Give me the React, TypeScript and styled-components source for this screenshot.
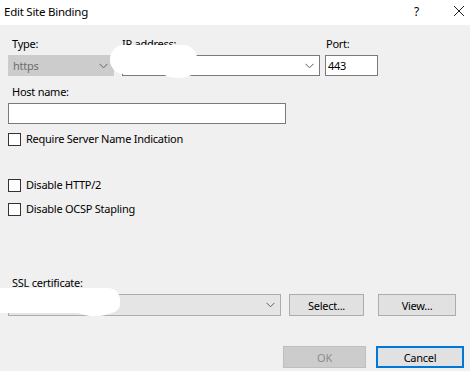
import React from "react";
import styled, { createGlobalStyle } from "styled-components";

const Global = createGlobalStyle`
  html, body { margin: 0; padding: 0; background: #ffffff; }
  body { font-family: "Noto Sans", "Open Sans", sans-serif; font-size: 11px; letter-spacing: -0.25px; color: #000; }
  * { box-sizing: border-box; }
`;

const Dialog = styled.div`
  width: 474px;
  height: 374px;
  display: flex;
  flex-direction: column;
  background: #ffffff;
  overflow: hidden;
`;

const TitleBar = styled.div`
  height: 25px;
  display: flex;
  align-items: center;
  padding-left: 4px;
  background: #ffffff;
`;

const Title = styled.div`
  flex: 1;
  font-size: 11.5px;
  line-height: 16px;
  margin-top: -2px;
`;

const Help = styled.div`
  font-size: 12px;
  line-height: 16px;
  margin-right: 34px;
  margin-top: -2px;
`;

const CloseBox = styled.div`
  width: 12px;
  height: 12px;
  margin-right: 9px;
  margin-top: -3px;
  display: flex;
`;

const Body = styled.div`
  position: relative;
  width: 470px;
  height: 346px;
  background: #f0f0f0;
  padding: 11px 6px 0 8px;
  display: flex;
  flex-direction: column;
`;

const Row = styled.div<{ $mt?: number; $gap?: number; $end?: boolean }>`
  display: flex;
  align-items: flex-end;
  margin-top: ${(p) => p.$mt ?? 0}px;
  gap: ${(p) => p.$gap ?? 0}px;
  justify-content: ${(p) => (p.$end ? "flex-end" : "flex-start")};
`;

const Field = styled.div<{ $w: number; $ml?: number }>`
  width: ${(p) => p.$w}px;
  margin-left: ${(p) => p.$ml ?? 0}px;
  display: flex;
  flex-direction: column;
`;

const Label = styled.div<{ $indent?: number }>`
  line-height: 16px;
  height: 16px;
  padding-left: ${(p) => p.$indent ?? 0}px;
  margin-bottom: 3px;
  white-space: nowrap;
`;

const Combo = styled.div<{ $variant: "disabled" | "white" | "light"; $h?: number }>`
  height: ${(p) => p.$h ?? 21}px;
  display: flex;
  align-items: center;
  justify-content: space-between;
  padding: 0 5px 0 4px;
  border: 1px solid
    ${(p) => (p.$variant === "disabled" ? "#cccccc" : p.$variant === "white" ? "#7a7a7a" : "#adadad")};
  background: ${(p) => (p.$variant === "disabled" ? "#cccccc" : p.$variant === "white" ? "#ffffff" : "#e5e5e5")};
  color: ${(p) => (p.$variant === "disabled" ? "#6d6d6d" : "#000")};
`;

const TextBox = styled.div`
  height: 21px;
  border: 1px solid #7a7a7a;
  background: #ffffff;
  padding-left: 2px;
  line-height: 19px;
`;

const CheckRow = styled.label<{ $mt: number }>`
  display: flex;
  align-items: center;
  gap: 5px;
  height: 16px;
  margin-top: ${(p) => p.$mt}px;
  line-height: 16px;
`;

const Box = styled.span`
  width: 13px;
  height: 13px;
  border: 1px solid #333333;
  background: #ffffff;
  flex: none;
`;

const Button = styled.div<{ $w: number; $ml?: number; $kind?: "normal" | "disabled" | "default" }>`
  width: ${(p) => p.$w}px;
  margin-left: ${(p) => p.$ml ?? 0}px;
  height: 22px;
  display: flex;
  align-items: center;
  justify-content: center;
  background: ${(p) => (p.$kind === "disabled" ? "#cccccc" : "#e1e1e1")};
  border: 1px solid
    ${(p) => (p.$kind === "disabled" ? "#bfbfbf" : p.$kind === "default" ? "#0078d7" : "#adadad")};
  box-shadow: ${(p) => (p.$kind === "default" ? "inset 0 0 0 1px #0078d7" : "none")};
  color: ${(p) => (p.$kind === "disabled" ? "#8c8c8c" : "#000")};
`;

const Redaction = styled.svg`
  position: absolute;
  left: 0;
  top: 0;
  pointer-events: none;
`;

const Chevron = () => (
  <svg width="9" height="6" viewBox="0 0 9 6">
    <polyline points="0.5,0.8 4.5,4.8 8.5,0.8" fill="none" stroke="#606060" strokeWidth="1" />
  </svg>
);

export default function App() {
  return (
    <>
      <Global />
      <Dialog>
        <TitleBar>
          <Title>Edit Site Binding</Title>
          <Help>?</Help>
          <CloseBox>
            <svg width="12" height="12" viewBox="0 0 12 12">
              <path d="M1 1 L11 11 M11 1 L1 11" stroke="#222" strokeWidth="1" />
            </svg>
          </CloseBox>
        </TitleBar>
        <Body>
          <Row>
            <Field $w={106}>
              <Label $indent={4}>Type:</Label>
              <Combo $variant="disabled">
                <span>https</span>
                <Chevron />
              </Combo>
            </Field>
            <Field $w={198} $ml={8}>
              <Label>IP address:</Label>
              <Combo $variant="white">
                <span />
                <Chevron />
              </Combo>
            </Field>
            <Field $w={53} $ml={5}>
              <Label $indent={1}>Port:</Label>
              <TextBox>443</TextBox>
            </Field>
          </Row>

          <Row $mt={8}>
            <Field $w={278}>
              <Label $indent={4}>Host name:</Label>
              <TextBox />
            </Field>
          </Row>

          <CheckRow $mt={7}>
            <Box />
            <span>Require Server Name Indication</span>
          </CheckRow>
          <CheckRow $mt={30}>
            <Box />
            <span>Disable HTTP/2</span>
          </CheckRow>
          <CheckRow $mt={8}>
            <Box />
            <span>Disable OCSP Stapling</span>
          </CheckRow>

          <Row $mt={58} $gap={8}>
            <Field $w={273}>
              <Label $indent={4}>SSL certificate:</Label>
              <Combo $variant="light" $h={22}>
                <span />
                <Chevron />
              </Combo>
            </Field>
            <Button $w={75}>Select...</Button>
            <Button $w={78} $ml={6}>View...</Button>
          </Row>

          <Row $mt={30} $gap={10} $end>
            <Button $w={83} $kind="disabled">OK</Button>
            <Button $w={88} $kind="default">Cancel</Button>
          </Row>

          <Redaction width="470" height="346" viewBox="0 25 470 346">
            <rect x="110" y="45" width="87" height="29" rx="14" fill="#ffffff" />
            <ellipse cx="178" cy="68" rx="19" ry="10" fill="#ffffff" />
            <rect x="-10" y="288" width="130" height="25" rx="12" fill="#ffffff" />
            <ellipse cx="95" cy="305" rx="25" ry="11" fill="#ffffff" />
          </Redaction>
        </Body>
      </Dialog>
    </>
  );
}
